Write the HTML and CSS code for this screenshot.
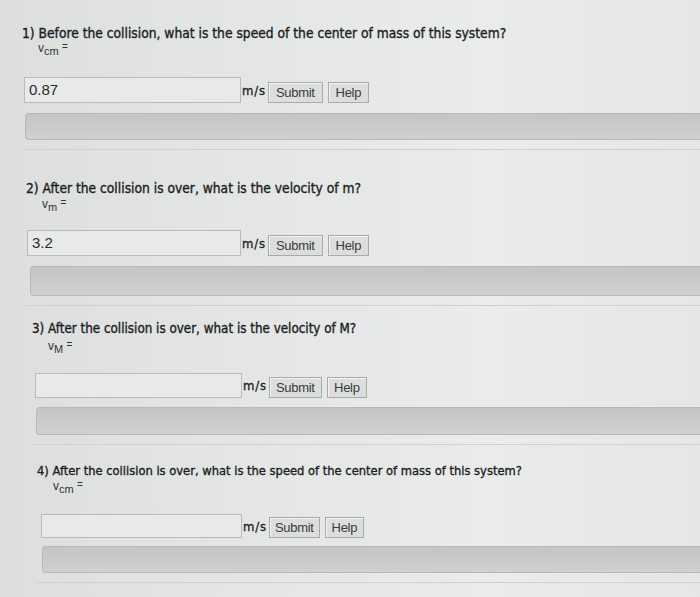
FILE: index.html
```html
<!DOCTYPE html>
<html>
<head>
<meta charset="utf-8">
<link rel="stylesheet" href="styles.css">
</head>
<body>
<div class="page">
  <section class="part p1">
    <p class="q">1) Before the collision, what is the speed of the center of mass of this system?</p>
    <p class="var">v<sub>cm</sub> <span class="eq">=</span></p>
    <div class="row">
      <div class="input">0.87</div>
      <span class="unit">m/s</span>
      <button class="btn submit">Submit</button>
      <button class="btn help">Help</button>
    </div>
    <div class="bar"></div>
    <div class="rule"></div>
  </section>
  <section class="part p2">
    <p class="q">2) After the collision is over, what is the velocity of m?</p>
    <p class="var">v<sub>m</sub> <span class="eq">=</span></p>
    <div class="row">
      <div class="input">3.2</div>
      <span class="unit">m/s</span>
      <button class="btn submit">Submit</button>
      <button class="btn help">Help</button>
    </div>
    <div class="bar"></div>
    <div class="rule"></div>
  </section>
  <section class="part p3">
    <p class="q">3) After the collision is over, what is the velocity of M?</p>
    <p class="var">v<sub>M</sub> <span class="eq">=</span></p>
    <div class="row">
      <div class="input"></div>
      <span class="unit">m/s</span>
      <button class="btn submit">Submit</button>
      <button class="btn help">Help</button>
    </div>
    <div class="bar"></div>
    <div class="rule"></div>
  </section>
  <section class="part p4">
    <p class="q">4) After the collision is over, what is the speed of the center of mass of this system?</p>
    <p class="var">v<sub>cm</sub> <span class="eq">=</span></p>
    <div class="row">
      <div class="input"></div>
      <span class="unit">m/s</span>
      <button class="btn submit">Submit</button>
      <button class="btn help">Help</button>
    </div>
    <div class="bar"></div>
    <div class="rule"></div>
  </section>
</div>
</body>
</html>
```
FILE: styles.css
```css
html, body {
  margin: 0;
  padding: 0;
  height: 100%;
  overflow: hidden;
}
body {
  background: linear-gradient(90deg, #dcdfde 0%, #e4e6e5 35%, #eaeceb 70%, #e5e7e7 100%);
  color: #222;
  font-family: "DejaVu Sans Condensed", "DejaVu Sans", sans-serif;
}
.page {
  padding-top: 25px;
}
.part {
  display: flex;
  flex-direction: column;
}
.q {
  margin: 0;
  font-size: 13.7px;
  line-height: 16px;
  color: #1c1f1f;
  white-space: nowrap;
  -webkit-text-stroke: 0.35px #1c1f1f;
}
.var {
  margin: 0 0 0 16px;
  font-family: "Liberation Sans", Arial, sans-serif;
  font-size: 12px;
  line-height: 12px;
  color: #333;
}
.var sub {
  font-size: 11px;
  vertical-align: -3px;
  line-height: 0;
}
.eq {
  font-size: 10px;
  vertical-align: 2px;
}
.row {
  display: flex;
  align-items: flex-end;
  margin-top: 23px;
}
.input {
  box-sizing: border-box;
  height: 26px;
  border: 1px solid #b9bbba;
  background: #e8eae9;
  font-family: "Liberation Sans", Arial, sans-serif;
  font-size: 15px;
  line-height: 24px;
  padding-left: 4px;
  color: #2a2a2a;
}
.unit {
  font-family: "DejaVu Sans Condensed", "DejaVu Sans", sans-serif;
  font-size: 13px;
  letter-spacing: 0.8px;
  line-height: 14px;
  color: #222;
  -webkit-text-stroke: 0.3px #222;
  padding: 0 2px 3px 1px;
  align-self: center;
  margin-top: 4px;
}
.btn {
  box-sizing: border-box;
  height: 21px;
  padding: 0;
  margin: 0 5px 0 0;
  border: 1px solid #a9abab;
  background: #dcdedd;
  font-family: "Liberation Sans", Arial, sans-serif;
  font-size: 13px;
  letter-spacing: -0.3px;
  color: #3a3a3a;
  box-shadow: inset 1px 1px 0 #f2f3f3;
}
.submit { width: 55px; }
.help { width: 41px; }
.bar {
  margin-top: 10px;
  height: 25px;
  background: linear-gradient(180deg, #c3c6c5 0%, #c9cccb 60%, #cfd1d0 100%);
  border: 1px solid #b7b9b8;
  border-right: none;
  border-radius: 4px 0 0 4px;
}
.rule {
  margin-top: 9px;
  height: 1px;
  background: #cfd1d0;
}
.p1 { padding-left: 22px; }
.p1 .input { margin-left: 2px; width: 217px; }
.p1 .bar { margin-left: 3px; }

.p2 { padding-left: 26px; margin-top: 30px; }
.p2 .input { margin-left: 1px; width: 214px; }
.p2 .bar { margin-left: 4px; height: 28px; }
.p2 .var { margin-top: 1px; }
.p2 .row { margin-top: 20px; }

.p3 { padding-left: 32px; margin-top: 15px; }
.p3 .q { font-size: 13.3px; }
.p3 .input { margin-left: 3px; width: 207px; height: 25px; }
.p3 .bar { margin-left: 4px; height: 26px; margin-top: 9px; }
.p3 .var { margin-top: 2px; }
.p3 .row { margin-top: 21px; }
.p3 .submit { width: 53px; }
.p3 .help { width: 40px; }

.p4 { padding-left: 37px; margin-top: 18px; }
.p4 .q { font-size: 12.8px; }
.p4 .input { margin-left: 4px; width: 201px; height: 24px; }
.p4 .bar { margin-left: 5px; height: 25px; margin-top: 8px; }
.p4 .var { margin-top: 0; }
.p4 .row { margin-top: 22px; }
.p4 .submit { width: 51px; }
.p4 .help { width: 39px; }
```
